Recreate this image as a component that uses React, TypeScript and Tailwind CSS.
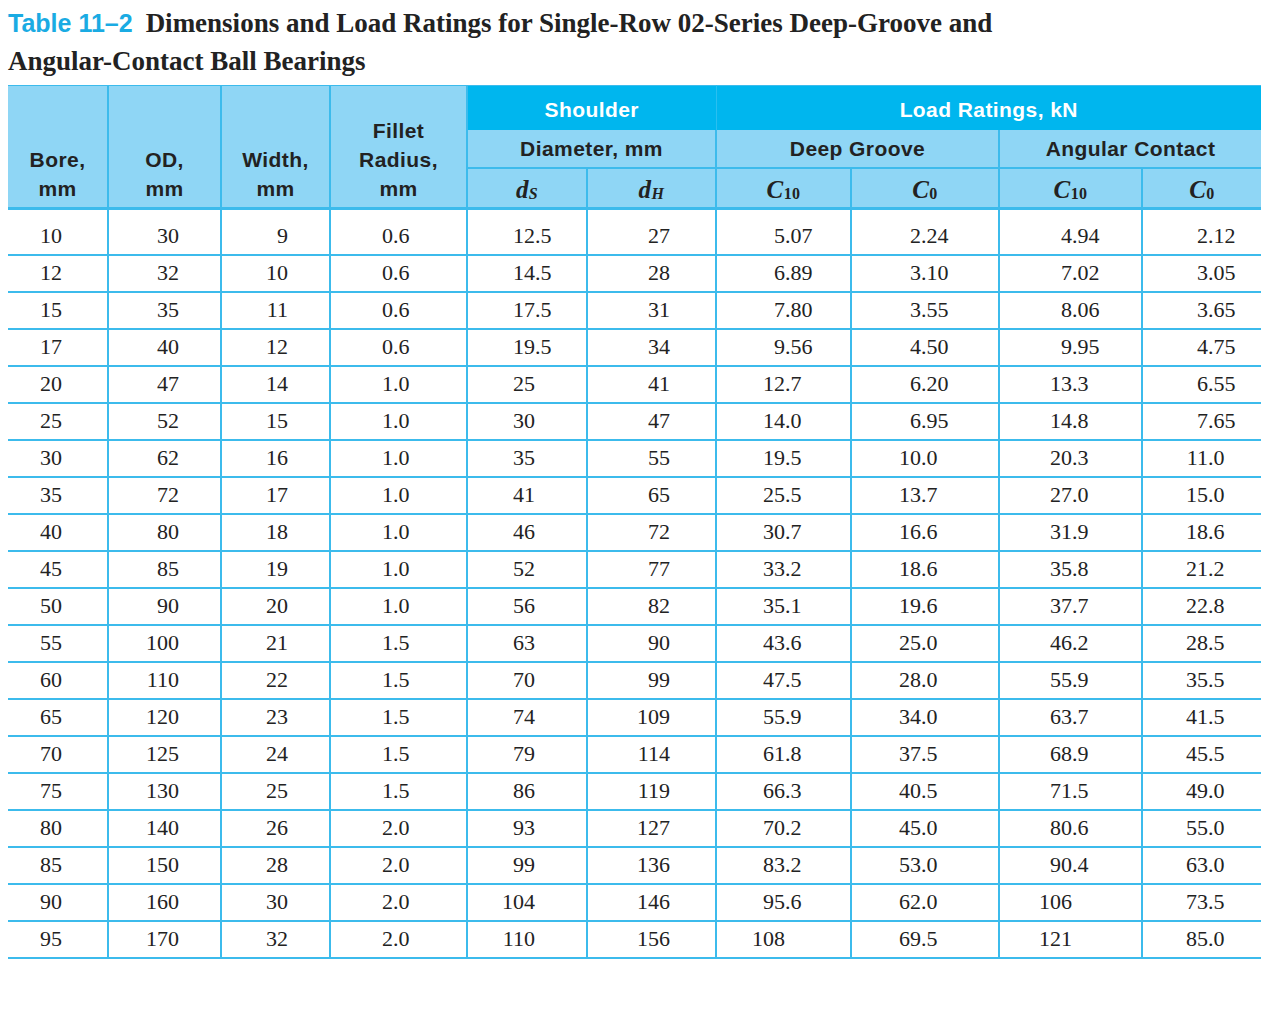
const rows: string[][] = [
  ["10", "30", "9", "0.6", "12.5", "27", "5.07", "2.24", "4.94", "2.12"],
  ["12", "32", "10", "0.6", "14.5", "28", "6.89", "3.10", "7.02", "3.05"],
  ["15", "35", "11", "0.6", "17.5", "31", "7.80", "3.55", "8.06", "3.65"],
  ["17", "40", "12", "0.6", "19.5", "34", "9.56", "4.50", "9.95", "4.75"],
  ["20", "47", "14", "1.0", "25", "41", "12.7", "6.20", "13.3", "6.55"],
  ["25", "52", "15", "1.0", "30", "47", "14.0", "6.95", "14.8", "7.65"],
  ["30", "62", "16", "1.0", "35", "55", "19.5", "10.0", "20.3", "11.0"],
  ["35", "72", "17", "1.0", "41", "65", "25.5", "13.7", "27.0", "15.0"],
  ["40", "80", "18", "1.0", "46", "72", "30.7", "16.6", "31.9", "18.6"],
  ["45", "85", "19", "1.0", "52", "77", "33.2", "18.6", "35.8", "21.2"],
  ["50", "90", "20", "1.0", "56", "82", "35.1", "19.6", "37.7", "22.8"],
  ["55", "100", "21", "1.5", "63", "90", "43.6", "25.0", "46.2", "28.5"],
  ["60", "110", "22", "1.5", "70", "99", "47.5", "28.0", "55.9", "35.5"],
  ["65", "120", "23", "1.5", "74", "109", "55.9", "34.0", "63.7", "41.5"],
  ["70", "125", "24", "1.5", "79", "114", "61.8", "37.5", "68.9", "45.5"],
  ["75", "130", "25", "1.5", "86", "119", "66.3", "40.5", "71.5", "49.0"],
  ["80", "140", "26", "2.0", "93", "127", "70.2", "45.0", "80.6", "55.0"],
  ["85", "150", "28", "2.0", "99", "136", "83.2", "53.0", "90.4", "63.0"],
  ["90", "160", "30", "2.0", "104", "146", "95.6", "62.0", "106", "73.5"],
  ["95", "170", "32", "2.0", "110", "156", "108", "69.5", "121", "85.0"],
];

const colWidths = [
  "w-[100px]",
  "w-[113px]",
  "w-[109px]",
  "w-[137px]",
  "w-[120px]",
  "w-[129px]",
  "w-[135px]",
  "w-[148px]",
  "w-[143px]",
  "w-[119px]",
];

// where the integer part ends, measured from the column's left edge
const intWidths = [
  "w-[54px]",
  "w-[70px]",
  "w-[66px]",
  "w-[62px]",
  "w-[67px]",
  "w-[82px]",
  "w-[68px]",
  "w-[69px]",
  "w-[72px]",
  "w-[65px]",
];

const serif = "font-['Liberation_Serif','Times_New_Roman',serif]";
const sans = "font-['Liberation_Sans',Arial,sans-serif]";

function Num({ value, col }: { value: string; col: number }) {
  const dot = value.indexOf(".");
  const whole = dot === -1 ? value : value.slice(0, dot);
  const frac = dot === -1 ? "" : value.slice(dot);
  return (
    <div className="flex whitespace-nowrap">
      <span className={`inline-block text-right ${intWidths[col]}`}>{whole}</span>
      <span>{frac}</span>
    </div>
  );
}

function Sym({ base, sub, italicSub }: { base: string; sub: string; italicSub?: boolean }) {
  return (
    <span className={`${serif} text-[25px] font-bold italic`}>
      {base}
      <sub className={`text-[16px] ${italicSub ? "italic" : "not-italic"} relative top-[1px]`}>{sub}</sub>
    </span>
  );
}

export default function App() {
  const light = "bg-[#8fd6f5]";
  const dark = "bg-[#00b6ee] text-white";
  const line = "border-[#3cbbec]";

  return (
    <div className="min-h-screen bg-white text-[#222] pt-[4px]">
      <div className="px-[8px]">
        <h1 className={`${serif} text-[27px] font-bold leading-[38px] text-[#222]`}>
          <span className={`${sans} text-[25px] font-bold text-[#1aabe3] mr-[13px]`}>Table 11–2</span>
          Dimensions and Load Ratings for Single-Row 02-Series Deep-Groove and
          <br />
          Angular-Contact Ball Bearings
        </h1>
      </div>

      <table className={`ml-[8px] mt-[5px] table-fixed border-collapse w-[1253px] border-t ${line}`}>
        <colgroup>
          {colWidths.map((w, i) => (
            <col key={i} className={w} />
          ))}
        </colgroup>
        <thead className={`${sans} text-[21px] font-bold tracking-[0.02em] leading-[29px] text-[#222]`}>
          <tr className="h-[44px]">
            <th rowSpan={3} className={`${light} border-r-2 ${line} align-bottom pb-[4px] font-bold`}>
              Bore,
              <br />
              mm
            </th>
            <th rowSpan={3} className={`${light} border-r-2 ${line} align-bottom pb-[4px] font-bold`}>
              OD,
              <br />
              mm
            </th>
            <th rowSpan={3} className={`${light} border-r-2 ${line} align-bottom pb-[4px] font-bold`}>
              Width,
              <br />
              mm
            </th>
            <th rowSpan={3} className={`${light} border-r-2 ${line} align-bottom pb-[4px] font-bold`}>
              Fillet
              <br />
              Radius,
              <br />
              mm
            </th>
            <th colSpan={2} className={`${dark} border-r border-[#29bff0] pt-[3px] font-bold`}>
              Shoulder
            </th>
            <th colSpan={4} className={`${dark} pt-[3px] font-bold`}>
              Load Ratings, kN
            </th>
          </tr>
          <tr className="h-[38px]">
            <th colSpan={2} className={`${light} border-r-2 border-b-2 ${line} pt-[1px] font-bold`}>
              Diameter, mm
            </th>
            <th colSpan={2} className={`${light} border-r-2 border-b-2 ${line} pt-[1px] font-bold`}>
              Deep Groove
            </th>
            <th colSpan={2} className={`${light} border-b-2 ${line} pt-[1px] font-bold`}>
              Angular Contact
            </th>
          </tr>
          <tr className="h-[41px]">
            <th className={`${light} border-r-2 ${line} pt-[4px]`}>
              <Sym base="d" sub="S" italicSub />
            </th>
            <th className={`${light} border-r-2 ${line} pt-[4px]`}>
              <Sym base="d" sub="H" italicSub />
            </th>
            <th className={`${light} border-r-2 ${line} pt-[4px]`}>
              <Sym base="C" sub="10" />
            </th>
            <th className={`${light} border-r-2 ${line} pt-[4px]`}>
              <Sym base="C" sub="0" />
            </th>
            <th className={`${light} border-r-2 ${line} pt-[4px]`}>
              <Sym base="C" sub="10" />
            </th>
            <th className={`${light} pt-[4px]`}>
              <Sym base="C" sub="0" />
            </th>
          </tr>
        </thead>
        <tbody className={`${serif} text-[22px] leading-[26px] border-t-[3px] ${line}`}>
          {rows.map((row, r) => (
            <tr key={r} className={r === 0 ? "h-[46px]" : "h-[37px]"}>
              {row.map((v, c) => (
                <td
                  key={c}
                  className={`p-0 border-b-2 ${line} ${c < row.length - 1 ? "border-r-2" : ""} ${
                    r === 0 ? "align-bottom pb-[5px]" : "align-middle"
                  }`}
                >
                  <Num value={v} col={c} />
                </td>
              ))}
            </tr>
          ))}
        </tbody>
      </table>
    </div>
  );
}
